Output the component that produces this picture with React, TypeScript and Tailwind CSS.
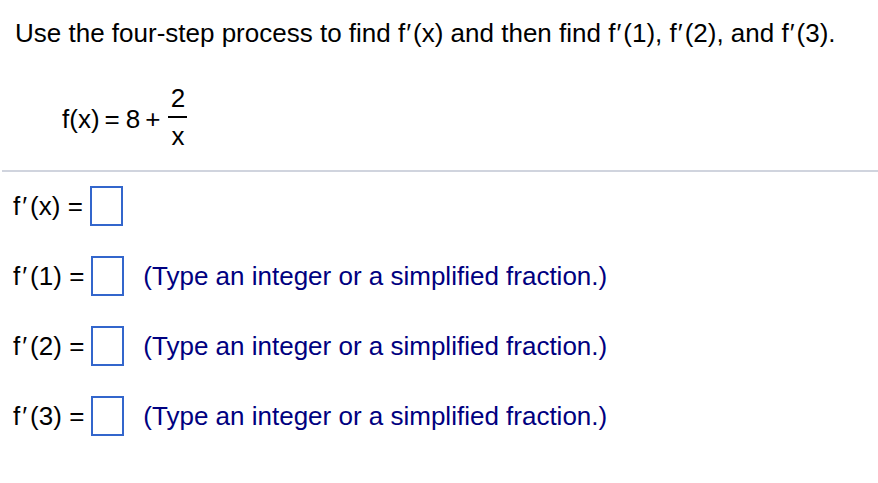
const hint = '(Type an integer or a simplified fraction.)'

function AnswerBox() {
  return <span className="inline-block w-[33px] h-[40px] border-2 border-[#3366cc] bg-white" />
}

function Prime({ arg }: { arg: string }) {
  return (
    <span>
      f<span className="ml-[2px] mr-[3px]">′</span>({arg}) =
    </span>
  )
}

const rows = [
  { arg: '1' },
  { arg: '2' },
  { arg: '3' },
]

export default function App() {
  return (
    <div className="w-[878px] h-[483px] bg-white text-black font-['Liberation_Sans',Arial,sans-serif] text-[26px] overflow-hidden">
      <p className="pl-[15px] pt-[19px] leading-[29px] whitespace-nowrap">
        Use the four-step process to find f<span className="ml-[1px] mr-[2px]">′</span>(x) and then find f<span className="ml-[1px] mr-[2px]">′</span>(1),
        f<span className="ml-[1px] mr-[2px]">′</span>(2), and f<span className="ml-[1px] mr-[2px]">′</span>(3).
      </p>

      {/* given function */}
      <div className="flex items-start pl-[62px] mt-[37px]">
        <div className="flex pt-[21px] leading-[26px]">
          <span>f(x)</span>
          <span className="ml-[5px]">=</span>
          <span className="ml-[6px]">8</span>
          <span className="ml-[5px]">+</span>
        </div>
        <div className="ml-[8px] flex flex-col items-center w-[19px]">
          <span className="leading-[26px]">2</span>
          <span className="mt-[5px] h-[2px] w-[19px] bg-black" />
          <span className="mt-[5px] leading-[26px]">x</span>
        </div>
      </div>

      <div className="mt-[21px] ml-[2px] h-[2px] bg-[#d0d4de]" />

      <div className="pl-[13px] pt-[14px] flex flex-col gap-[30px]">
        <div className="flex items-center h-[40px]">
          <span className="mr-[7px]"><Prime arg="x" /></span>
          <AnswerBox />
        </div>
        {rows.map(r => (
          <div key={r.arg} className="flex items-center h-[40px]">
            <span className="mr-[7px]"><Prime arg={r.arg} /></span>
            <AnswerBox />
            <span className="ml-[19px] text-[#000080]">{hint}</span>
          </div>
        ))}
      </div>
    </div>
  )
}
